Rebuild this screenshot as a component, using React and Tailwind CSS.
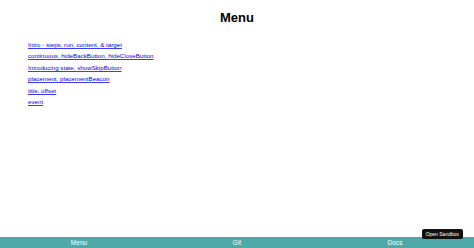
import React from "react";

const links = [
  "Intro - steps, run, content, & target",
  "continuous, hideBackButton, hideCloseButton",
  "Introducing state, showSkipButton",
  "placement, placementBeacon",
  "title, offset",
  "event",
];

function App() {
  return (
    <div className="min-h-screen bg-white font-['Liberation_Sans',Arial,sans-serif] flex flex-col">
      <div className="flex-1">
        <h1 className="text-center text-[13px] font-bold text-black pt-[10px] leading-[15px]">
          Menu
        </h1>
        <ul className="pl-[28px] pt-[14px] flex flex-col">
          {links.map((l) => (
            <li key={l} className="text-[6.2px] leading-[11.4px]">
              <a
                href="#"
                className="text-[#0000ee] underline decoration-[#3b3bf0] decoration-[0.6px] underline-offset-[1px]"
              >
                {l}
              </a>
            </li>
          ))}
        </ul>
      </div>
      <nav className="h-[11px] bg-[#4fa9a9] grid grid-cols-3 text-white text-[6.5px] leading-[11px] text-center">
        <a href="#">Menu</a>
        <a href="#">Git</a>
        <a href="#">Docs</a>
      </nav>
      <button className="fixed right-[11px] bottom-[9px] bg-[#111] text-white text-[5px] leading-[10px] px-[4px] rounded-[2px]">
        Open Sandbox
      </button>
    </div>
  );
}

export default App;
